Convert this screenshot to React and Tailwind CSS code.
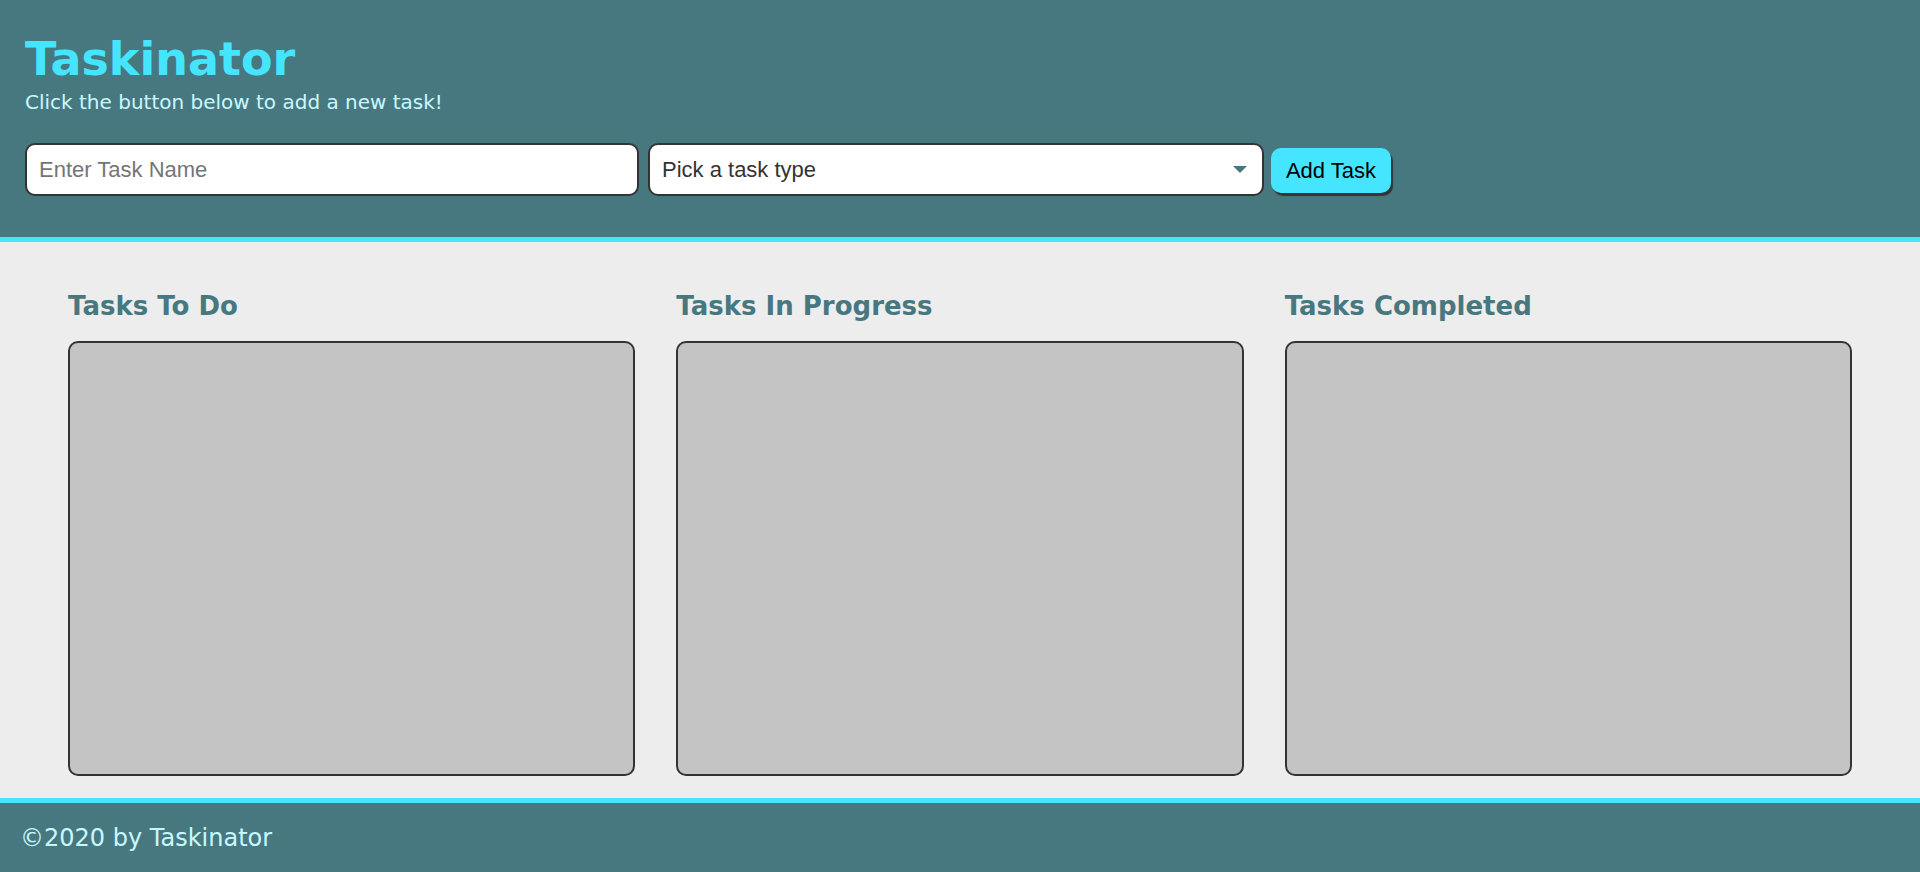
import { useState } from "react";

const columns = ["Tasks To Do", "Tasks In Progress", "Tasks Completed"];

function App() {
    const [taskName, setTaskName] = useState("");
    const [taskType, setTaskType] = useState("");

    const handleSubmit = (e) => {
        e.preventDefault();
    };

    return (
        <div className="min-h-screen flex flex-col font-['DejaVu_Sans',Verdana,sans-serif]">
            <header className="bg-[#48787f] border-b-[5px] border-[#45e5ff] px-[25px] pt-[33px] pb-[41px]">
                <h1 className="text-[46px] leading-[52px] font-bold text-[#45e5ff]">
                    Taskinator
                </h1>
                <p className="mt-[6px] text-[20px] leading-[23px] text-[#c8f8ff]">
                    Click the button below to add a new task!
                </p>

                <form
                    onSubmit={handleSubmit}
                    className="mt-[29px] flex items-start font-['Liberation_Sans',Arial,sans-serif] text-[22px]"
                >
                    <input
                        type="text"
                        placeholder="Enter Task Name"
                        value={taskName}
                        onChange={(e) => setTaskName(e.target.value)}
                        className="w-[614px] h-[53px] bg-white border-2 border-[#333] rounded-[10px] px-[12px] text-[#222] placeholder:text-[#757575] outline-none"
                    />

                    <div className="relative ml-[9px]">
                        <select
                            value={taskType}
                            onChange={(e) => setTaskType(e.target.value)}
                            className="appearance-none w-[616px] h-[53px] bg-white border-2 border-[#333] rounded-[10px] pl-[12px] pr-[40px] text-[#333] outline-none"
                        >
                            <option value="" disabled>
                                Pick a task type
                            </option>
                            <option value="Web">Web</option>
                            <option value="Mobile">Mobile</option>
                            <option value="Print">Print</option>
                        </select>
                        <svg
                            className="absolute right-[17px] top-[23px] pointer-events-none"
                            width="14"
                            height="7"
                            viewBox="0 0 14 7"
                        >
                            <path d="M0 0 L14 0 L7 7 Z" fill="#48787f" />
                        </svg>
                    </div>

                    <button
                        type="submit"
                        className="ml-[7px] mt-[5px] w-[120px] h-[45px] bg-[#45e5ff] text-black rounded-[10px] shadow-[2px_3px_1px_#333]"
                    >
                        Add Task
                    </button>
                </form>
            </header>

            <main className="flex-1 bg-[#ededed] px-[68px] pt-[49px] pb-[22px]">
                <div className="grid grid-cols-3 gap-[41px]">
                    {columns.map((title) => (
                        <section key={title}>
                            <h2 className="text-[26px] leading-[30px] font-bold text-[#48787f] mb-[20px]">
                                {title}
                            </h2>
                            <ul className="h-[435px] bg-[#c4c4c4] border-2 border-[#333] rounded-[10px]"></ul>
                        </section>
                    ))}
                </div>
            </main>

            <footer className="bg-[#48787f] border-t-[5px] border-[#45e5ff] px-[20px] pt-[21px] pb-[20px]">
                <p className="text-[24px] leading-[28px] text-[#c8f8ff]">&copy;2020 by Taskinator</p>
            </footer>
        </div>
    );
}

export default App;
